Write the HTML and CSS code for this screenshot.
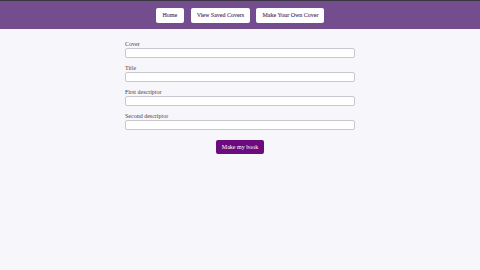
FILE: index.html
```html
<!DOCTYPE html>
<html>
<head>
<meta charset="utf-8">
<link rel="stylesheet" href="styles.css">
</head>
<body>
<header class="topbar">
  <nav class="nav">
    <button class="nav-btn">Home</button>
    <button class="nav-btn">View Saved Covers</button>
    <button class="nav-btn">Make Your Own Cover</button>
  </nav>
</header>
<main class="main">
  <form class="form">
    <label class="field"><span class="label">Cover</span><input class="input" type="text"></label>
    <label class="field"><span class="label">Title</span><input class="input" type="text"></label>
    <label class="field"><span class="label">First descriptor</span><input class="input" type="text"></label>
    <label class="field"><span class="label">Second descriptor</span><input class="input" type="text"></label>
    <div class="actions"><button type="button" class="make-btn">Make my book</button></div>
  </form>
</main>
</body>
</html>
```
FILE: styles.css
```css
html, body { margin: 0; padding: 0; }
body {
  width: 480px; height: 270px; overflow: hidden;
  background: #f7f6fb;
  font-family: "Liberation Serif", serif;
}
.topbar {
  border-top: 1px solid #3a3340;
  background: #744d8e;
  height: 28px;
  display: flex; align-items: center; justify-content: center;
}
.nav { display: flex; gap: 6.5px; }
.nav-btn {
  background: #fff; border: none; border-radius: 2px;
  height: 15px; padding: 0 6px;
  font-family: inherit; font-size: 6px; color: #5e4470;
  -webkit-text-stroke: 0.15px #5e4470;
}
.nav-btn:first-child { padding: 0 7px; }
.main { display: flex; justify-content: center; padding-top: 12px; }
.form { width: 230px; display: flex; flex-direction: column; gap: 5px; }
.field { display: flex; flex-direction: column; height: 19px; }
.label { font-size: 6px; color: #444; height: 7px; line-height: 7px; }
.input {
  box-sizing: border-box; width: 230px; height: 10px; margin: 0;
  border: 1px solid #cac8ce; border-radius: 2px; background: #fff; padding: 0;
}
.actions { display: flex; justify-content: center; margin-top: 3px; }
.make-btn {
  background: #6c0b7d; color: #fff; border: none; border-radius: 2px;
  width: 48px; height: 14px; padding: 0;
  font-family: inherit; font-size: 6px;
}
```
